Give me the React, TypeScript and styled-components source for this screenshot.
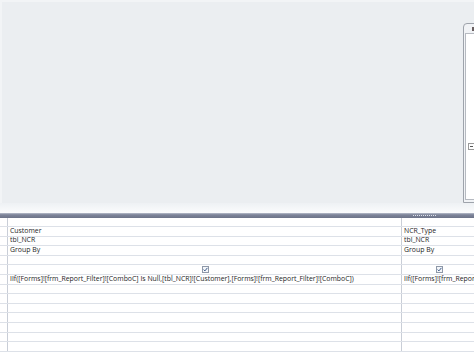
import React from 'react';
import styled, { createGlobalStyle } from 'styled-components';

const GlobalStyle = createGlobalStyle`
  html, body {
    margin: 0;
    padding: 0;
    background: #ffffff;
  }
  body {
    font-family: 'Open Sans', 'DejaVu Sans', sans-serif;
  }
`;

type Column = {
  field: string;
  table: string;
  total: string;
  sort: string;
  show: boolean;
  criteria: string;
  width: number;
};

const columns: Column[] = [
  {
    field: 'Customer',
    table: 'tbl_NCR',
    total: 'Group By',
    sort: '',
    show: true,
    criteria:
      'IIf([Forms]![frm_Report_Filter]![ComboC] Is Null,[tbl_NCR]![Customer],[Forms]![frm_Report_Filter]![ComboC])',
    width: 394
  },
  {
    field: 'NCR_Type',
    table: 'tbl_NCR',
    total: 'Group By',
    sort: '',
    show: true,
    criteria: 'IIf([Forms]![frm_Repor',
    width: 73
  }
];

const EXTRA_ROWS = 7;

const Check = () => (
  <svg width="7" height="7" viewBox="0 0 7 7">
    <rect x="0.5" y="0.5" width="6" height="6" fill="#f4f6f9" stroke="#8e98a8" />
    <path d="M1.6 3.6 L2.9 4.9 L5.4 1.9" fill="none" stroke="#3b5a8a" strokeWidth="1" />
  </svg>
);

const CollapseMark = () => (
  <svg width="7" height="7" viewBox="0 0 7 7">
    <rect x="0.5" y="0.5" width="6" height="6" fill="#ffffff" stroke="#9a9a9a" />
    <path d="M2 3.5 H5" stroke="#555" strokeWidth="1" />
  </svg>
);

const App = () => {
  const rowLabels = ['field', 'table', 'total', 'sort', 'show', 'criteria'] as const;

  return (
    <>
      <GlobalStyle />
      <Page>
        <DesignArea>
          <TableWindow>
            <TitleBar>
              <TitleIcon />
            </TitleBar>
            <FieldList>
              <FieldSpacer />
              <CollapseMark />
            </FieldList>
          </TableWindow>
        </DesignArea>
        <Fade />
        <Splitter>
          <Grip />
        </Splitter>
        <Grid>
          <SelectorRow>
            <RowHead />
            {columns.map((c, i) => (
              <Cell key={i} style={{ width: c.width }} />
            ))}
          </SelectorRow>
          {rowLabels.map((key) => (
            <Row key={key}>
              <RowHead />
              {columns.map((c, i) => (
                <Cell key={i} style={{ width: c.width }} center={key === 'show'}>
                  {key === 'show' ? c.show && <Check /> : c[key]}
                </Cell>
              ))}
            </Row>
          ))}
          {Array.from({ length: EXTRA_ROWS }).map((_, r) => (
            <Row key={`e${r}`}>
              <RowHead />
              {columns.map((c, i) => (
                <Cell key={i} style={{ width: c.width }} />
              ))}
            </Row>
          ))}
        </Grid>
      </Page>
    </>
  );
};

export default App;

const Page = styled.div`
  width: 474px;
  height: 355px;
  overflow: hidden;
  display: flex;
  flex-direction: column;
  background: #ffffff;
`;

const DesignArea = styled.div`
  height: 203px;
  flex-shrink: 0;
  background: #ebeef1;
  border-top: 2px solid #f2f4f6;
  border-left: 2px solid #f2f4f6;
  box-sizing: border-box;
  display: flex;
  padding: 21px 0 0 461px;
`;

const TableWindow = styled.div`
  width: 150px;
  height: 180px;
  flex-shrink: 0;
  box-sizing: border-box;
  border: 1px solid #9ea3ab;
  border-radius: 4px 0 0 0;
  background: #f1f3f6;
  display: flex;
  flex-direction: column;
  padding: 0 0 2px 1px;
`;

const TitleBar = styled.div`
  height: 9px;
  flex-shrink: 0;
  display: flex;
  align-items: center;
  padding-left: 7px;
`;

const TitleIcon = styled.div`
  width: 4px;
  height: 4px;
  background: #6a5f60;
`;

const FieldList = styled.div`
  flex: 1;
  background: #ffffff;
  border: 1px solid #b6bac1;
  display: flex;
  flex-direction: column;
  padding-left: 2px;
`;

const FieldSpacer = styled.div`
  height: 109px;
`;

const Fade = styled.div`
  height: 10px;
  flex-shrink: 0;
  background: linear-gradient(#eef1f4, #fbfcfd);
`;

const Splitter = styled.div`
  height: 5px;
  flex-shrink: 0;
  box-sizing: border-box;
  background: linear-gradient(#b9bfcc 0%, #7e859a 35%, #6c7388 100%);
  display: flex;
  align-items: center;
  padding-left: 413px;
`;

const Grip = styled.div`
  width: 23px;
  height: 0;
  border-top: 1px dotted #dfe3ec;
`;

const Grid = styled.div`
  display: flex;
  flex-direction: column;
  font-size: 6.9px;
  color: #1e1e1e;
`;

const SelectorRow = styled.div`
  height: 8px;
  display: flex;
  border-bottom: 1px solid #dde1e8;
`;

const Row = styled.div`
  height: 9.6px;
  box-sizing: border-box;
  display: flex;
  border-bottom: 1px solid #dde1e8;
`;

const RowHead = styled.div`
  width: 7px;
  flex-shrink: 0;
  border-right: 1px solid #c9ced7;
`;

const Cell = styled.div<{ center?: boolean }>`
  flex-shrink: 0;
  box-sizing: border-box;
  border-right: 1px solid #c9ced7;
  padding-left: 2px;
  display: flex;
  align-items: center;
  justify-content: ${(p) => (p.center ? 'center' : 'flex-start')};
  white-space: nowrap;
  overflow: hidden;
  line-height: 1;
`;
